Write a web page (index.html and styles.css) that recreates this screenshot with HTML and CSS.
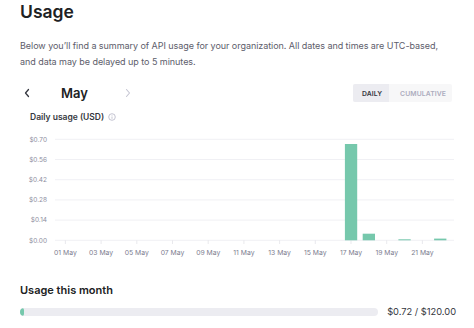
FILE: index.html
```html
<!DOCTYPE html>
<html lang="en">
<head>
    <meta charset="UTF-8">
    <meta name="viewport" content="width=device-width, initial-scale=1.0">
    <title>Usage</title>
    <link rel="stylesheet" href="styles.css">
</head>
<body>
    <div class="page">
        <h1 class="title">Usage</h1>
        <p class="intro">Below you’ll find a summary of API usage for your organization. All dates and times are UTC-based, and data may be delayed up to 5 minutes.</p>

        <div class="toolbar">
            <div class="month-nav">
                <button class="nav-btn" type="button">
                    <svg width="6" height="10" viewBox="0 0 6 10"><path d="M4.5 1.5 1.5 5l3 3.5" fill="none" stroke="currentColor" stroke-width="1.3" stroke-linecap="round" stroke-linejoin="round"/></svg>
                </button>
                <span class="month">May</span>
                <button class="nav-btn disabled" type="button">
                    <svg width="6" height="10" viewBox="0 0 6 10"><path d="M1.5 1.5 4.5 5l-3 3.5" fill="none" stroke="currentColor" stroke-width="1.1" stroke-linecap="round" stroke-linejoin="round"/></svg>
                </button>
            </div>
            <div class="toggle">
                <button class="toggle-btn active" type="button">Daily</button>
                <button class="toggle-btn" type="button">Cumulative</button>
            </div>
        </div>

        <div class="chart-block">
            <div class="chart-title">
                Daily usage (USD)
                <svg class="info" width="8" height="8" viewBox="0 0 8 8"><circle cx="4" cy="4" r="3.3" fill="none" stroke="currentColor" stroke-width="0.7"/><path d="M4 3.5v2.3" stroke="currentColor" stroke-width="0.7"/><circle cx="4" cy="2.4" r="0.45" fill="currentColor"/></svg>
            </div>
            <svg class="chart" width="436" height="132" viewBox="0 0 436 132">
                <g class="grid">
                    <line x1="35" x2="434" y1="12.3" y2="12.3"/>
                    <line x1="35" x2="434" y1="32.5" y2="32.5"/>
                    <line x1="35" x2="434" y1="52.7" y2="52.7"/>
                    <line x1="35" x2="434" y1="72.9" y2="72.9"/>
                    <line x1="35" x2="434" y1="93.1" y2="93.1"/>
                    <line x1="35" x2="434" y1="113.3" y2="113.3"/>
                </g>
                <g class="y-labels">
                    <text x="27" y="14.6">$0.70</text>
                    <text x="27" y="34.8">$0.56</text>
                    <text x="27" y="55">$0.42</text>
                    <text x="27" y="75.2">$0.28</text>
                    <text x="27" y="95.4">$0.14</text>
                    <text x="27" y="115.6">$0.00</text>
                </g>
                <g class="ticks">
                    <line x1="45.4" x2="45.4" y1="113.3" y2="117"/>
                    <line x1="81.1" x2="81.1" y1="113.3" y2="117"/>
                    <line x1="116.8" x2="116.8" y1="113.3" y2="117"/>
                    <line x1="152.5" x2="152.5" y1="113.3" y2="117"/>
                    <line x1="188.2" x2="188.2" y1="113.3" y2="117"/>
                    <line x1="223.9" x2="223.9" y1="113.3" y2="117"/>
                    <line x1="259.6" x2="259.6" y1="113.3" y2="117"/>
                    <line x1="295.3" x2="295.3" y1="113.3" y2="117"/>
                    <line x1="331" x2="331" y1="113.3" y2="117"/>
                    <line x1="366.7" x2="366.7" y1="113.3" y2="117"/>
                    <line x1="402.4" x2="402.4" y1="113.3" y2="117"/>
                </g>
                <g class="x-labels">
                    <text x="45.4" y="128">01 May</text>
                    <text x="81.1" y="128">03 May</text>
                    <text x="116.8" y="128">05 May</text>
                    <text x="152.5" y="128">07 May</text>
                    <text x="188.2" y="128">09 May</text>
                    <text x="223.9" y="128">11 May</text>
                    <text x="259.6" y="128">13 May</text>
                    <text x="295.3" y="128">15 May</text>
                    <text x="331" y="128">17 May</text>
                    <text x="366.7" y="128">19 May</text>
                    <text x="402.4" y="128">21 May</text>
                </g>
                <g class="bars">
                    <rect x="324.9" y="17" width="12.3" height="96.3"/>
                    <rect x="342.7" y="106.7" width="12.3" height="6.6"/>
                    <rect x="378.4" y="112.3" width="12.3" height="1"/>
                    <rect x="414.1" y="111.6" width="12.3" height="1.7"/>
                </g>
            </svg>
        </div>

        <h2 class="section-title">Usage this month</h2>
        <div class="meter-row">
            <div class="meter"><div class="meter-fill" style="width: 1.1%"></div></div>
            <span class="meter-label">$0.72 / $120.00</span>
        </div>
    </div>
</body>
</html>
```

FILE: styles.css
```css
body {
    margin: 0;
    background: #fff;
    font-family: Inter, "Liberation Sans", sans-serif;
    color: #202123;
}

.page {
    padding: 0 18px 0 20px;
}

.title {
    margin: 2px 0 0;
    font-size: 17.5px;
    line-height: 20px;
    font-weight: 600;
}

.intro {
    margin: 16px 0 0;
    font-size: 9px;
    line-height: 15.5px;
    letter-spacing: -0.05px;
    color: #5d5d6b;
}

.toolbar {
    display: flex;
    justify-content: space-between;
    align-items: center;
    margin-top: 15px;
    height: 18px;
}

.month-nav {
    display: flex;
    align-items: center;
}

.nav-btn {
    border: none;
    background: none;
    padding: 0;
    margin-left: 4px;
    color: #353740;
    display: flex;
}

.nav-btn.disabled {
    color: #c5c5d2;
    margin-left: 0;
}

.month {
    font-size: 13px;
    font-weight: 600;
    width: 95px;
    padding-left: 31px;
    box-sizing: border-box;
}

.toggle {
    display: flex;
    height: 18px;
    margin-right: 4px;
    background: #f7f7f8;
    border-radius: 2px;
    overflow: hidden;
}

.toggle-btn {
    border: none;
    background: none;
    padding: 0 6px 0 11px;
    font-family: inherit;
    font-size: 6.8px;
    font-weight: 600;
    letter-spacing: 0.1px;
    text-transform: uppercase;
    color: #acacbe;
}

.toggle-btn.active {
    background: #ececf1;
    color: #353740;
    padding: 0 7px 0 9px;
}

.chart-block {
    margin-top: 9px;
}

.chart-title {
    display: flex;
    align-items: center;
    gap: 4px;
    padding-left: 10px;
    font-size: 8.5px;
    line-height: 12px;
    font-weight: 600;
    color: #353740;
}

.info {
    color: #acacbe;
}

.chart {
    display: block;
    margin-top: 4px;
}

.grid line {
    stroke: #ececf1;
    stroke-width: 0.8;
}

.ticks line {
    stroke: #e3e3e8;
    stroke-width: 0.8;
}

.y-labels text {
    font-size: 6.5px;
    fill: #8e8ea0;
    text-anchor: end;
}

.x-labels text {
    font-size: 6.8px;
    fill: #7d7d8f;
    text-anchor: middle;
}

.bars rect {
    fill: #76c8ac;
}

.section-title {
    margin: 24px 0 0;
    font-size: 11px;
    line-height: 14px;
    font-weight: 600;
}

.meter-row {
    display: flex;
    align-items: center;
    gap: 9px;
    margin-top: 9px;
}

.meter {
    flex: 1;
    height: 8px;
    background: #ececf1;
    border-radius: 4px;
    overflow: hidden;
}

.meter-fill {
    height: 100%;
    background: #76c8ac;
    border-radius: 4px;
}

.meter-label {
    font-size: 9.3px;
    color: #353740;
}
```
